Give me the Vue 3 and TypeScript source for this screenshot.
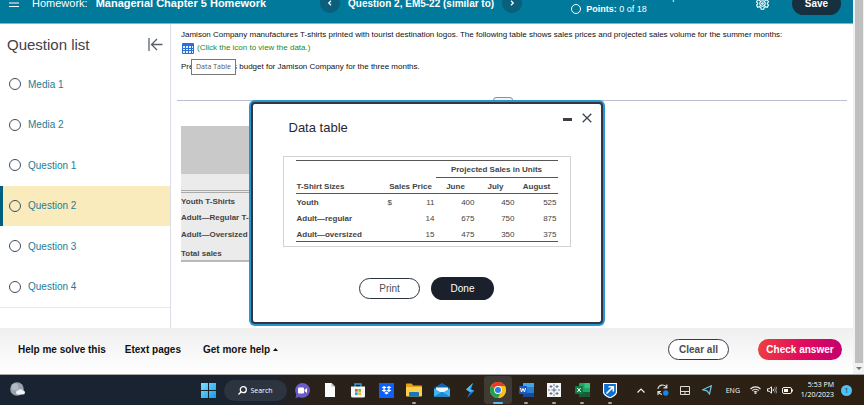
<script setup lang="ts">
import { ref } from 'vue'

interface SizeRow {
  label: string
  currency: string
  price: number
  units: number[]
}

const questions = ['Media 1', 'Media 2', 'Question 1', 'Question 2', 'Question 3', 'Question 4']
const current = ref(3)

const months = ['June', 'July', 'August']
const sizes: SizeRow[] = [
  { label: 'Youth', currency: '$', price: 11, units: [400, 450, 525] },
  { label: 'Adult—regular', currency: '', price: 14, units: [675, 750, 875] },
  { label: 'Adult—oversized', currency: '', price: 15, units: [475, 350, 375] },
]
const budgetRows = ['Youth T-Shirts', 'Adult—Regular T-Shirts', 'Adult—Oversized T-Shirts', 'Total sales']
</script>

<template>
  <div class="screen">
    <div class="browser">
      <div class="page">
        <header class="topbar">
          <div class="topbar-row">
            <div class="course">
              <button class="plain menu" aria-label="Menu">
                <svg width="10" height="10" viewBox="0 0 10 10"><path d="M0 1.5h10M0 5h10M0 8.5h10" stroke="#fff" stroke-width="1.2" /></svg>
              </button>
              <span class="course-kind">Homework:</span>
              <strong>Managerial Chapter 5 Homework</strong>
            </div>
            <nav class="pager">
              <button class="round" aria-label="Previous question">
                <svg width="6" height="6" viewBox="0 0 6 6"><path d="M4 .8 1.8 3 4 5.2" fill="none" stroke="#fff" stroke-width="1.3" /></svg>
              </button>
              <strong>Question 2, EM5-22 (similar to)</strong>
              <button class="round" aria-label="Next question">
                <svg width="6" height="6" viewBox="0 0 6 6"><path d="M2 .8 4.2 3 2 5.2" fill="none" stroke="#fff" stroke-width="1.3" /></svg>
              </button>
            </nav>
            <div class="status">
              <div class="scores">
                <div><b>HW Score:</b> 0%, 0 of 133 points</div>
                <div class="points"><i class="ring"></i><span><b>Points:</b> 0 of 18</span></div>
              </div>
              <button class="plain gear" aria-label="Settings">
                <svg width="13" height="13" viewBox="0 0 24 24" fill="none" stroke="#fff" stroke-width="2">
                  <path d="M9.6 1.5h4.8l.8 3.2 2.5 1.4 3.1-1 2.3 4-2.3 2.3v1.2l2.3 2.3-2.3 4-3.1-1-2.5 1.4-.8 3.2H9.6l-.8-3.2-2.5-1.4-3.1 1-2.3-4 2.3-2.3v-1.2L.9 9.100l2.300-4 3.100 1 2.500-1.400z" />
                  <circle cx="12" cy="12" r="5" /><circle cx="12" cy="12" r="1.500" />
                </svg>
              </button>
              <button class="save">Save</button>
            </div>
          </div>
        </header>

        <div class="body">
          <aside class="sidebar">
            <div class="side-head">
              <h2>Question list</h2>
              <button class="plain" aria-label="Collapse question list">
                <svg width="15" height="13" viewBox="0 0 15 13" fill="none" stroke="#5b6068" stroke-width="1.300"><path d="M1 0v13M14.500 6.500H3.500M9 1 3.500 6.500 9 12" /></svg>
              </button>
            </div>
            <ul class="questions">
              <li v-for="(q, i) in questions" :key="q" :class="{ active: i === current }">
                <a href="#" @click.prevent="current = i"><i class="ring dark"></i>{{ q }}</a>
              </li>
            </ul>
          </aside>

          <main class="work">
            <div class="prompt">
              <p>Jamison Company manufactures T-shirts printed with tourist destination logos. The following table shows sales prices and projected sales volume for the summer months:</p>
              <p class="view-data">
                <svg width="12" height="11" viewBox="0 0 12 11">
                  <rect width="12" height="11" rx="1" fill="#2b6fd4" />
                  <path d="M1 3h2v2H1zM4 3h2v2H4zM7 3h2v2H7zM10 3h1v2h-1zM1 6h2v1H1zM4 6h2v1H4zM7 6h2v1H7zM10 6h1v1h-1zM1 8h2v2H1zM4 8h2v2H4zM7 8h2v2H7zM10 8h1v2h-1z" fill="#e4eefc" />
                </svg>
                <a href="#" @click.prevent>(Click the icon to view the data.)</a>
                <span class="tip" role="tooltip">Data Table</span>
              </p>
              <p>Prepare a sales budget for Jamison Company for the three months.</p>
            </div>
            <div class="divider"><span class="handle"></span></div>
            <table class="budget">
              <thead>
                <tr class="band"><th></th></tr>
                <tr class="sub"><th></th></tr>
              </thead>
              <tbody>
                <tr v-for="r in budgetRows" :key="r"><th scope="row">{{ r }}</th></tr>
              </tbody>
            </table>
          </main>
        </div>

        <footer class="actions">
          <button class="plain">Help me solve this</button>
          <button class="plain">Etext pages</button>
          <button class="plain more">Get more help
            <svg width="5" height="3" viewBox="0 0 5 3"><path d="M0 3 2.500 0 5 3z" fill="#111" /></svg>
          </button>
          <span class="grow"></span>
          <button class="clear">Clear all</button>
          <button class="check">Check answer</button>
        </footer>

        <div class="overlay">
          <section class="dialog" role="dialog" aria-labelledby="dialog-title">
            <div class="dialog-head">
              <h3 id="dialog-title">Data table</h3>
              <button class="plain" aria-label="Minimize">
                <svg width="9" height="11" viewBox="0 0 9 11"><path d="M0 6.500h9" stroke="#3c4046" stroke-width="3" /></svg>
              </button>
              <button class="plain" aria-label="Close">
                <svg width="10" height="10" viewBox="0 0 10 10"><path d="M.7.7l8.600 8.600M9.300.7.7 9.300" stroke="#3d4552" stroke-width="1.300" /></svg>
              </button>
            </div>
            <div class="sheet">
              <table class="sales">
                <colgroup><col /><col class="c-cur" /><col class="c-price" /><col class="c-gap" /><col class="c-unit" /><col class="c-unit" /><col class="c-last" /></colgroup>
                <thead>
                  <tr class="group"><td colspan="4"></td><th colspan="3" class="span">Projected Sales in Units</th></tr>
                  <tr class="cols">
                    <th class="left head">T-Shirt Sizes</th>
                    <th colspan="2">Sales Price</th><td></td>
                    <th v-for="m in months" :key="m">{{ m }}</th>
                  </tr>
                </thead>
                <tbody>
                  <tr v-for="s in sizes" :key="s.label">
                    <th class="left" scope="row">{{ s.label }}</th>
                    <td class="left">{{ s.currency }}</td>
                    <td class="price">{{ s.price }}</td><td></td>
                    <td v-for="(u, i) in s.units" :key="i">{{ u }}</td>
                  </tr>
                </tbody>
              </table>
            </div>
            <div class="dialog-actions">
              <button class="print">Print</button>
              <button class="done">Done</button>
            </div>
          </section>
        </div>
      </div>
      <div class="scroll">
        <div class="thumb"></div>
        <svg width="6" height="3" viewBox="0 0 6 3"><path d="M0 0h6L3 3z" fill="#777" /></svg>
      </div>
    </div>

    <footer class="taskbar">
      <svg class="weather" width="16" height="16" viewBox="0 0 16 16"><circle cx="7" cy="7" r="6.800" fill="#9aa3ad" /><circle cx="5" cy="5" r="3.500" fill="#b2bac1" /><path d="M8 12.500a2 2 0 0 1 0-4 3 3 0 0 1 5 0 2 2 0 0 1 0 4z" fill="#eef3f7" /></svg>
      <span class="slot">
        <svg width="15" height="15" viewBox="0 0 15 15"><defs><linearGradient id="win" x2="1" y2="1"><stop stop-color="#7ce0fb" /><stop offset="1" stop-color="#119bea" /></linearGradient></defs><path d="M0 0h7v7H0zM8 0h7v7H8zM0 8h7v7H0zM8 8h7v7H8z" fill="url(#win)" /></svg>
      </span>
      <button class="search">
        <svg width="9" height="9" viewBox="0 0 9 9" fill="none" stroke="#fff" stroke-width="1.300"><circle cx="5.300" cy="3.700" r="3" /><path d="M3.200 5.800.5 8.500" /></svg>
        Search
      </button>
      <span class="slot">
        <svg width="15" height="15" viewBox="0 0 15 15"><path d="M7.500 0a7.400 7.400 0 1 1-3.300 14L.5 15l.8-3.700A7.400 7.400 0 0 1 7.500 0z" fill="#6a5bc6" /><rect x="3" y="4.500" width="6" height="6" rx="1" fill="#fff" /><path d="M9.500 7l2.500-2v5L9.500 8z" fill="#fff" /></svg>
      </span>
      <span class="slot">
        <svg width="10" height="14" viewBox="0 0 10 14"><path d="M0 0h6.500L10 3.500V14H0z" fill="#fafafa" /><path d="M6.500 0v3.500H10z" fill="#b9b9b9" /></svg>
      </span>
      <span class="slot">
        <svg width="14" height="15" viewBox="0 0 14 15"><path d="M4 4V1h6v3" fill="none" stroke="#26a8e0" stroke-width="1.300" /><path d="M0 3.500h14V13a1.500 1.500 0 0 1-1.500 1.500h-11A1.500 1.500 0 0 1 0 13z" fill="#f4f6f8" /><path d="M4 6h2.700v2.700H4z" fill="#e8532b" /><path d="M7.300 6H10v2.700H7.300z" fill="#7db928" /><path d="M4 9.300h2.700V12H4z" fill="#1fa5e6" /><path d="M7.300 9.300H10V12H7.300z" fill="#f5b91a" /></svg>
      </span>
      <span class="slot">
        <svg width="15" height="15" viewBox="0 0 15 15"><rect width="15" height="15" fill="#0b61fe" /><path d="M5.100 3 7.500 4.500 5.100 6 2.700 4.500zM9.900 3l2.400 1.500L9.900 6 7.500 4.500zM5.100 6l2.400 1.500L5.100 9 2.700 7.500zM9.900 6l2.400 1.500L9.900 9 7.500 7.500zM7.500 8.500l2.300 1.500-2.300 1.500L5.200 10z" fill="#fff" /></svg>
      </span>
      <span class="slot open">
        <svg width="16" height="14" viewBox="0 0 16 14"><path d="M0 1.500A1 1 0 0 1 1 .5h4.500l1.700 2H15a1 1 0 0 1 1 1V12H0z" fill="#e5a218" /><path d="M0 4h16v8.500a1 1 0 0 1-1 1H1a1 1 0 0 1-1-1z" fill="#fccf4d" /><path d="M3 13.500V10a1 1 0 0 1 1-1h8a1 1 0 0 1 1 1v3.500z" fill="#1577bd" /></svg>
      </span>
      <span class="slot">
        <svg width="16" height="14" viewBox="0 0 16 14"><path d="M0 5 8 0l8 5v8.500H0z" fill="#0f66b3" /><path d="M2 4.500h12V9H2z" fill="#f1f5f8" /><path d="M0 5.500 8 10l8-4.500v8H0z" fill="#3fb6ee" /><path d="M0 13.500 8 9l8 4.500z" fill="#1b8ad6" /></svg>
      </span>
      <span class="slot">
        <svg width="10" height="15" viewBox="0 0 10 15"><path d="M8 0 1 6.500 5 9z" fill="#2aa3f0" /><path d="M5 5.500 9.300 8 2 15l3-6z" fill="#1a78dc" /><path d="M8 0 4.500 6 9.300 8 5 9 1 6.500z" fill="#4bbcf7" /></svg>
      </span>
      <span class="slot open focus">
        <svg width="16" height="16" viewBox="0 0 16 16"><circle cx="8" cy="8" r="8" fill="#fbc116" /><path d="M8 8 1.070 4A8 8 0 0 1 14.930 4z" fill="#e33b2e" /><path d="M8 8 1.070 4A8 8 0 0 0 8 16l3.500-6z" fill="#24a148" /><path d="M8 4h6.930A8 8 0 0 1 8 16l3.500-6z" fill="#fbc116" /><circle cx="8" cy="8" r="3.900" fill="#fff" /><circle cx="8" cy="8" r="3" fill="#3479e8" /></svg>
      </span>
      <span class="slot open">
        <svg width="15" height="14" viewBox="0 0 15 14"><rect x="4" width="11" height="14" rx="1" fill="#2b7cd3" /><path d="M4 0h11v4H4z" fill="#41a5ee" /><path d="M4 10h11v3a1 1 0 0 1-1 1H5a1 1 0 0 1-1-1z" fill="#174a9c" /><rect y="3" width="8" height="8" rx="1" fill="#185abd" /><path d="M1.500 5l1 4L4 5.500 5.500 9l1-4" fill="none" stroke="#fff" /></svg>
      </span>
      <span class="slot open">
        <svg width="14" height="14" viewBox="0 0 14 14"><rect width="14" height="14" fill="#f5f6f8" /><path d="M7 4.500v5M4.500 7h5M4 2v3M2.500 3.500h3M10 2v3M8.500 3.500h3M4 9v3M2.500 10.500h3M10 9v3M8.500 10.500h3M7 .8v2M7 11.200v2M1 7h2M11 7h2" stroke="#566987" stroke-width=".9" /></svg>
      </span>
      <span class="slot open">
        <svg width="15" height="14" viewBox="0 0 15 14"><rect x="4" width="11" height="14" rx="1" fill="#21a366" /><path d="M9.500 0H14a1 1 0 0 1 1 1v4H9.500z" fill="#33c481" /><path d="M4 9h11v4a1 1 0 0 1-1 1H5a1 1 0 0 1-1-1z" fill="#185c37" /><rect y="3" width="8" height="8" rx="1" fill="#107c41" /><path d="M2.300 5l3.400 4M5.700 5 2.300 9" stroke="#fff" /></svg>
      </span>
      <span class="slot open">
        <svg width="14" height="15" viewBox="0 0 14 15"><path d="M.5.500h13V9c0 3-3.500 4.500-6.500 5.800C4 13.500.5 12 .5 9z" fill="#0c6fd1" stroke="#fff" stroke-width="1.200" /><path d="M3.500 10.500 10 4M5.500 3.700h4.800v4.800" fill="none" stroke="#fff" stroke-width="1.600" /></svg>
      </span>
      <span class="grow"></span>
      <div class="tray">
        <span class="t wide"><svg width="8" height="5" viewBox="0 0 8 5"><path d="M.5 4.500 4 1l3.500 3.500" fill="none" stroke="#eee" stroke-width="1.200" /></svg></span>
        <span class="t wide"><svg width="12" height="12" viewBox="0 0 12 12"><path d="M1 5a4.500 4.500 0 0 1 8.500-1.500M9.800.5v3.300H6.500M5 10.500A4.500 4.500 0 0 1 1.500 7.500M1 11V7.500h3" fill="none" stroke="#ddd" stroke-width="1.200" /><circle cx="8.800" cy="9" r="2.700" fill="#1687e8" /></svg></span>
        <span class="t wide"><svg width="10" height="9" viewBox="0 0 10 9"><path d="M.5.500h9v8h-9zM.5 5.500h9M5 5.500v3" fill="none" stroke="#ddd" /></svg></span>
        <span class="t wide"><svg width="10" height="10" viewBox="0 0 10 10"><path d="M9.300.8.800 4.800 5 5.800 7.500 9z" fill="none" stroke="#6ec4dc" stroke-width="1.200" /></svg></span>
        <span class="t lang">ENG</span>
        <span class="t"><svg width="11" height="8" viewBox="0 0 11 8" fill="none" stroke="#eee" stroke-width="1.100"><path d="M.5 3a7 7 0 0 1 10 0M2.200 4.700a4.600 4.600 0 0 1 6.600 0M3.800 6.200a2.400 2.400 0 0 1 3.400 0" /><circle cx="5.500" cy="7.200" r=".4" /></svg></span>
        <span class="t"><svg width="10" height="8" viewBox="0 0 10 8" fill="none" stroke="#eee"><path d="M.5 2.800h1.700L4.500.8v6.400L2.200 5.200H.5zM6 2.800a2 2 0 0 1 0 2.400" /><path d="M7.500 1.500a4 4 0 0 1 0 5M9 .6a6 6 0 0 1 0 6.800" stroke="#999" /></svg></span>
        <span class="t"><svg width="11" height="7" viewBox="0 0 11 7"><rect x=".5" y=".5" width="9" height="6" rx="1.500" fill="none" stroke="#eee" /><path d="M2 2h4v3H2z" fill="#fff" /><path d="M10.500 2.500v2" stroke="#eee" /></svg></span>
        <div class="clock"><span>5:53 PM</span><span>1/20/2023</span></div>
        <span class="badge">1</span>
      </div>
    </footer>
  </div>
</template>

<style>
html, body { margin: 0; overflow: hidden; }
</style>

<style scoped>
* { box-sizing: border-box; }
.screen { display: flex; flex-direction: column; height: 100vh; font-family: "Liberation Sans", Arial, sans-serif; font-size: 10px; color: #222; background: #fff; }
button { font: inherit; color: inherit; cursor: pointer; padding: 0; }
svg { display: block; flex: none; }
h2, h3, p, ul { margin: 0; padding: 0; font-weight: 400; }
.plain { border: 0; background: none; }
.grow { flex: 1; }
.browser { flex: 1; min-height: 0; display: flex; border-bottom: 1px solid #a6a6a6; }
.page { flex: 1; min-width: 0; display: flex; flex-direction: column; position: relative; }

.topbar { height: 24px; flex: none; display: flex; align-items: flex-end; overflow: hidden; background: #00799b; border-bottom: 1px solid #7fb5c6; color: #fff; }
.topbar-row { flex: 1; height: 40px; display: grid; grid-template-columns: 320px auto 1fr; align-items: center; }
.course { display: flex; align-items: center; font-size: 11px; padding-left: 9px; }
.menu { margin-right: 13px; }
.course-kind { margin-right: 8px; font-size: 11px; }
.pager { display: flex; align-items: center; gap: 8px; }
.round { width: 20px; height: 20px; border: 0; border-radius: 50%; background: #0a5f7c; display: grid; place-items: center; }
.status { display: flex; align-items: center; padding: 0 12px 0 49px; }
.scores { flex: 1; font-size: 9px; line-height: 12px; white-space: nowrap; }
.points { display: flex; align-items: center; gap: 5px; }
.ring { width: 10px; height: 10px; border: 1px solid #fff; border-radius: 50%; flex: none; }
.ring.dark { width: 12px; height: 12px; border-color: #3f4d60; }
.gear { margin-right: 23px; }
.save { width: 49px; height: 23px; border: 0; border-radius: 12px; background: #16303f; color: #fff; font-weight: 700; }

.body { flex: 1; min-height: 0; display: flex; overflow: hidden; }
.sidebar { width: 171px; flex: none; border-right: 1px solid #dcdde6; }
.side-head { display: flex; align-items: center; justify-content: space-between; height: 40px; padding: 0 7px; }
.side-head h2 { font-size: 15px; color: #3f4247; }
.questions { list-style: none; display: grid; grid-template-rows: repeat(6, 1fr); height: 244px; border-bottom: 1px solid #e8e8ec; }
.questions li { display: flex; border-left: 3px solid transparent; }
.questions .active { background: #f9ebbb; border-left-color: #005f7c; }
.questions a { flex: 1; display: flex; align-items: center; gap: 7px; padding-left: 6px; color: #1c7c98; text-decoration: none; }

.work { flex: 1; min-width: 0; padding: 4px 6px 0; }
.prompt { padding-left: 4px; font-size: 8px; line-height: 14px; color: #111; white-space: nowrap; }
.view-data { position: relative; display: flex; align-items: center; gap: 3px; height: 12px; margin-bottom: 6px; padding-left: 1px; }
.view-data a { color: #1d8a1d; text-decoration: none; }
.tip { position: absolute; left: 10px; top: 17px; height: 16px; padding: 0 4px; line-height: 14px; border: 1px solid #777; background: #fff; color: #555; font-family: "Open Sans", sans-serif; font-size: 7px; }
.divider { margin-top: 26px; height: 1px; background: #b9bfcf; position: relative; }
.handle { position: absolute; left: 316px; top: -3px; width: 20px; height: 8px; border: 1px solid #8a919c; border-radius: 3px; background: #f2f3f5; }
.budget { margin: 25px 0 0 4px; width: 60%; border-collapse: collapse; background: #ebebeb; font-size: 8px; color: #444; border-bottom: 2px solid #b9b9b9; }
.budget th { height: 17px; padding: 2px 0 0; text-align: left; white-space: nowrap; }
.budget .band th { height: 48px; background: #c9c9c9; }
.budget .sub th { border-bottom: 3px double #aaa; }
.budget tbody tr:last-child th { height: 19px; padding-top: 4px; }

.actions { flex: none; height: 46px; display: flex; align-items: center; padding: 0 11px 3px 18px; background: linear-gradient(#efefef, #fff); font-weight: 700; color: #111; }
.actions .plain { margin-right: 19px; }
.actions .more { display: flex; align-items: center; gap: 3px; margin-left: 3px; }
.clear { width: 61px; height: 21px; border: 1px solid #343b49; border-radius: 11px; background: #fff; color: #4c4c4c; }
.check { width: 84px; height: 21px; margin-left: 29px; border: 0; border-radius: 11px; background: linear-gradient(100deg, #ee403d, #e0095f 55%, #c2006f); color: #fff; }

.overlay { position: absolute; inset: 0; display: flex; justify-content: center; align-items: flex-start; padding-top: 102px; pointer-events: none; }
.dialog { width: 352px; border: 2px solid #32373f; border-radius: 4px; box-shadow: 0 0 0 2px #2497d2; background: #fff; padding: 9px 30px 22px; pointer-events: auto; }
.dialog-head { display: flex; align-items: flex-start; gap: 10px; height: 43px; margin-right: -21px; padding-left: 6px; }
.dialog-head h3 { flex: 1; font-size: 13px; line-height: 15px; padding-top: 7px; color: #1f2937; }
.sheet { border: 1px solid #d3d3d3; padding: 3px 12px 4px; }
.sales { width: 100%; table-layout: fixed; border-collapse: collapse; border-top: 1px solid #555; border-bottom: 1px solid #555; font-size: 8px; color: #444; }
.sales th, .sales td { height: 16px; padding: 3px 1px 0; text-align: right; white-space: nowrap; line-height: 10px; }
.c-cur { width: 16px; }
.c-price { width: 32px; }
.c-gap { width: 1px; }
.c-unit { width: 40px; }
.c-last { width: 42px; }
.sales .left { text-align: left; }
.sales .price { padding-right: 0; }
.sales .group th { height: 17px; border-bottom: 1px solid #555; text-align: center; padding-top: 2px; }
.sales .cols th { text-align: center; }
.sales .cols .left { text-align: left; }
.sales .cols { border-bottom: 1px solid #555; }
.dialog-actions { display: flex; justify-content: center; align-items: center; gap: 11px; margin-top: 30px; }
.print { width: 61px; height: 21px; border: 1px solid #2b3240; border-radius: 11px; background: #fff; color: #4b4f58; }
.done { width: 63px; height: 23px; border: 0; border-radius: 12px; background: #1a202c; color: #fff; }

.scroll { width: 11px; flex: none; display: flex; flex-direction: column; align-items: center; background: #f1f1f1; padding-bottom: 4px; }
.thumb { flex: 1; width: 8px; background: #bfbfbf; margin-bottom: 4px; }

.taskbar { flex: none; height: 30px; display: flex; align-items: center; padding: 0 12px 0 10px; background: linear-gradient(90deg, #192332 0, #1a2330 30%, #29211a 36%, #2a2118 60%, #2d2013 100%); color: #fff; font-family: "Open Sans", sans-serif; font-size: 7px; }
.weather { margin-right: 168px; }
.slot { width: 28px; height: 28px; display: grid; place-items: center; position: relative; flex: none; }
.slot.open::after { content: ""; position: absolute; bottom: 0; left: 12px; width: 4px; height: 2px; border-radius: 1px; background: #a6a29d; }
.slot.focus { background: #403a34; border-radius: 3px; }
.slot.focus::after { left: 9px; width: 10px; background: #5bb8ec; }
.search { width: 63px; height: 21px; margin: 0 1px 0 2px; border: 0; border-radius: 11px; background: #2c3440; display: flex; align-items: center; justify-content: center; gap: 3px; }
.tray { display: flex; align-items: center; }
.t { width: 16px; display: grid; place-items: center; }
.t.wide { width: 22px; }
.t.lang { width: 30px; }
.clock { display: flex; flex-direction: column; align-items: flex-end; line-height: 10px; margin: 0 7px 0 5px; }
.badge { width: 11px; height: 11px; border-radius: 50%; background: #4cc2f5; color: #12333f; text-align: center; line-height: 11px; }
</style>
